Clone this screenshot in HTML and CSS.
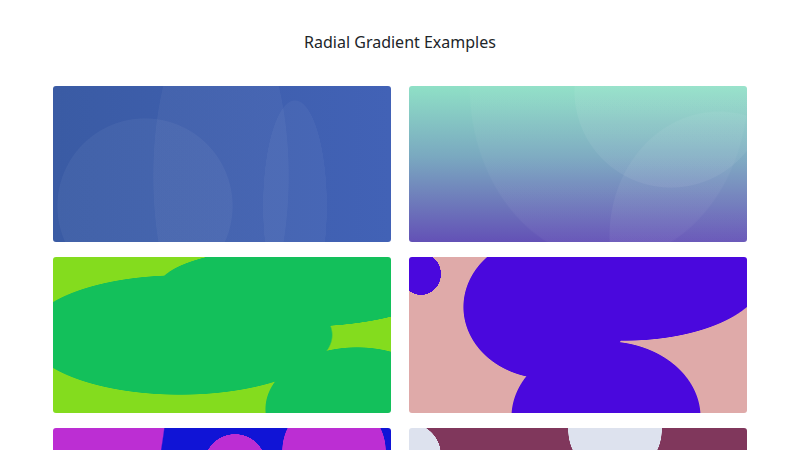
FILE: index.html
```html
<!DOCTYPE html>
<html lang="en">

<head>
    <meta charset="utf-8">
    <meta name="viewport" content="width=device-width, initial-scale=1.0">
    <title>Radial Gradient Examples</title>
    <link rel="stylesheet" href="styles.css">
</head>

<body>
    <main class="page">
        <h1 class="title">Radial Gradient Examples</h1>

        <section class="grid">
            <div class="swatch swatch-ocean"></div>
            <div class="swatch swatch-mint"></div>
            <div class="swatch swatch-lime"></div>
            <div class="swatch swatch-violet"></div>
            <div class="swatch swatch-magenta"></div>
            <div class="swatch swatch-plum"></div>
        </section>
    </main>
</body>

</html>
```

FILE: styles.css
```css
body {
    margin: 0;
    background: #fff;
    font-family: "Noto Sans", "Open Sans", sans-serif;
    color: #212529;
}

.page {
    width: 694px;
    margin: 0 auto;
}

.title {
    margin: 0;
    padding: 31px 0 33px;
    font-size: 16px;
    line-height: 22px;
    font-weight: normal;
    text-align: center;
}

.grid {
    display: grid;
    grid-template-columns: 1fr 1fr;
    gap: 15px 18px;
}

.swatch {
    height: 156px;
    border-radius: 3px;
    background-repeat: no-repeat;
}

/* soft blue with faint glassy circles */
.swatch-ocean {
    background:
        radial-gradient(88px 88px at 92px 120px, rgba(255, 255, 255, .045) 99%, transparent 100%),
        radial-gradient(68px 173px at 168px 90px, rgba(255, 255, 255, .04) 99%, transparent 100%),
        radial-gradient(32px 106px at 242px 120px, rgba(255, 255, 255, .04) 99%, transparent 100%),
        linear-gradient(90deg, #3a5ba4, #4262b6);
}

.swatch-mint {
    background:
        radial-gradient(97px 97px at 262px 5px, rgba(255, 255, 255, .06) 99%, transparent 100%),
        radial-gradient(110px 125px at 310px 150px, rgba(255, 255, 255, .05) 99%, transparent 100%),
        radial-gradient(140px 175px at 200px 0px, rgba(255, 255, 255, .04) 99%, transparent 100%),
        linear-gradient(180deg, #8fe0c6, #7aa9c0 45%, #6351b6);
}

/* flat blobs: each layer is one hard-edged ellipse */
.swatch-lime {
    background:
        radial-gradient(153px 60px at 127px 78px, #13c05b 99%, transparent 100%),
        radial-gradient(140px 40px at 245px 30px, #13c05b 99%, transparent 100%),
        radial-gradient(92px 62px at 304px 152px, #13c05b 99%, transparent 100%),
        #84dc1e;
}

.swatch-violet {
    background:
        radial-gradient(20px 21px at 12px 17px, #4a08dd 99%, transparent 100%),
        radial-gradient(84px 72px at 138px 50px, #4a08dd 99%, transparent 100%),
        radial-gradient(140px 64px at 215px 20px, #4a08dd 99%, transparent 100%),
        radial-gradient(95px 76px at 197px 160px, #4a08dd 99%, transparent 100%),
        #dfaaa9;
}

.swatch-magenta {
    background:
        radial-gradient(120px 350px at 0px -126px, #bc2ed3 99%, transparent 100%),
        radial-gradient(31px 31px at 182px 37px, #bc2ed3 99%, transparent 100%),
        radial-gradient(52px 52px at 281px 23px, #bc2ed3 99%, transparent 100%),
        #1014d6;
}

.swatch-plum {
    background:
        radial-gradient(32px 32px at 0px 27px, #dde2ee 99%, transparent 100%),
        radial-gradient(47px 47px at 206px 2px, #dde2ee 99%, transparent 100%),
        #80375c;
}
```
